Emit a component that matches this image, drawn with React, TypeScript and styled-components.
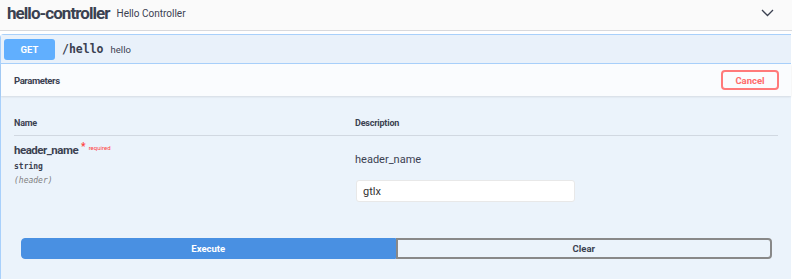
import React from "react";
import styled, { createGlobalStyle } from "styled-components";

const Global = createGlobalStyle`
  html, body { margin: 0; padding: 0; background: #ffffff; }
  body { font-family: Roboto, "Noto Sans", sans-serif; color: #3b4151; }
  * { box-sizing: border-box; }
`;

const Page = styled.div`
  width: 792px;
  height: 279px;
  overflow: hidden;
  background: #ffffff;
`;

const TagHeader = styled.div`
  height: 31px;
  display: flex;
  align-items: center;
  padding: 0 18px 5px 7px;
  background: #fafafa;
  border-bottom: 1px solid rgba(59, 65, 81, 0.18);
`;

const TagName = styled.span`
  font-size: 17px;
  font-weight: 700;
  letter-spacing: -0.95px;
  color: #3b4151;
`;

const TagDesc = styled.span`
  font-size: 10px;
  margin-left: 7px;
  margin-top: 2px;
  color: #3b4151;
  flex: 1;
`;

const Chevron = styled.svg`
  width: 13px;
  height: 8px;
`;

const OpBlock = styled.div`
  margin-top: 3px;
  width: 791px;
  border: 1px solid #a8d0fb;
  border-right: none;
  border-radius: 4px 0 0 4px;
  background: #ebf3fb;
`;

const Summary = styled.div`
  height: 29px;
  display: flex;
  align-items: center;
  padding: 0 3px;
  border-bottom: 1px solid #a8d0fb;
  background: #e9f1fa;
`;

const Method = styled.span`
  width: 51px;
  height: 21px;
  border-radius: 3px;
  background: #61affe;
  color: #ffffff;
  font-size: 9.5px;
  font-weight: 700;
  display: flex;
  align-items: center;
  justify-content: center;
`;

const Path = styled.span`
  font-family: "DejaVu Sans Mono", "Liberation Mono", monospace;
  font-weight: 700;
  font-size: 11.5px;
  color: #3b4151;
  margin-left: 7px;
`;

const OpSummary = styled.span`
  font-size: 9.5px;
  color: #3b4151;
  margin-left: 7px;
`;

const SectionHeader = styled.div`
  height: 32px;
  display: flex;
  align-items: center;
  justify-content: space-between;
  padding: 0 12px 0 13px;
  background: #fafcfe;
  box-shadow: 0 1px 2px rgba(0, 0, 0, 0.1);
`;

const SectionTitle = styled.span`
  font-size: 9.5px;
  font-weight: 700;
  letter-spacing: -0.4px;
  color: #3b4151;
`;

const CancelButton = styled.button`
  width: 58px;
  height: 20px;
  border: 2px solid #ff7a7a;
  border-radius: 4px;
  background: transparent;
  color: #ff6a6a;
  font-family: inherit;
  font-size: 9.5px;
  font-weight: 700;
  padding: 0;
`;

const Body = styled.div`
  padding: 19px 13px 30px 13px;
`;

const Table = styled.div`
  display: grid;
  grid-template-columns: 341px 1fr;
`;

const HeadCell = styled.div`
  font-size: 9px;
  font-weight: 700;
  letter-spacing: -0.2px;
  color: #3b4151;
  padding: 3px 0 7px 0;
  border-bottom: 1px solid rgba(59, 65, 81, 0.15);
`;

const Cell = styled.div`
  padding-top: 7px;
`;

const ParamName = styled.div`
  font-size: 11.5px;
  font-weight: 700;
  letter-spacing: -0.5px;
  color: #3b4151;
  display: flex;
  align-items: flex-start;
`;

const Required = styled.span`
  color: #ff4040;
  font-size: 6px;
  font-weight: 400;
  letter-spacing: 0;
  margin-left: 3px;
  margin-top: -1px;
  display: flex;
  align-items: center;
  gap: 3px;
`;

const Dot = styled.span`
  font-size: 10px;
  font-weight: 700;
  line-height: 10px;
`;

const ParamType = styled.div`
  font-family: "DejaVu Sans Mono", "Liberation Mono", monospace;
  font-size: 8px;
  font-weight: 600;
  color: #3b4151;
  margin-top: 5px;
`;

const ParamIn = styled.div`
  font-family: "DejaVu Sans Mono", "Liberation Mono", monospace;
  font-size: 8px;
  font-style: italic;
  color: #808080;
  margin-top: 5px;
`;

const DescText = styled.div`
  font-size: 11px;
  color: #3b4151;
  margin-top: 10px;
`;

const Input = styled.input`
  margin-top: 14px;
  margin-left: 1px;
  width: 219px;
  height: 22px;
  border: 1px solid #e8e8e8;
  border-radius: 3px;
  background: #ffffff;
  padding: 0 6px;
  font-family: inherit;
  font-size: 11px;
  color: #333;
  outline: none;
`;

const Actions = styled.div`
  display: flex;
  margin: 36px 6px 0 7px;
`;

const ActionButton = styled.button<{ $primary?: boolean }>`
  flex: 1;
  height: 21px;
  padding: 0;
  font-family: inherit;
  font-size: 9.5px;
  font-weight: 700;
  color: ${(p) => (p.$primary ? "#ffffff" : "#3b4151")};
  background: ${(p) => (p.$primary ? "#4990e2" : "transparent")};
  border: ${(p) => (p.$primary ? "1px solid #4990e2" : "2px solid #888888")};
  border-radius: ${(p) => (p.$primary ? "4px 0 0 4px" : "0 4px 4px 0")};
`;

export default function App() {
  return (
    <Page>
      <Global />
      <TagHeader>
        <TagName>hello-controller</TagName>
        <TagDesc>Hello Controller</TagDesc>
        <Chevron viewBox="0 0 13 8">
          <path d="M1 1 L6.5 6.5 L12 1" fill="none" stroke="#3b4151" strokeWidth="1.3" />
        </Chevron>
      </TagHeader>
      <OpBlock>
        <Summary>
          <Method>GET</Method>
          <Path>/hello</Path>
          <OpSummary>hello</OpSummary>
        </Summary>
        <SectionHeader>
          <SectionTitle>Parameters</SectionTitle>
          <CancelButton>Cancel</CancelButton>
        </SectionHeader>
        <Body>
          <Table>
            <HeadCell>Name</HeadCell>
            <HeadCell>Description</HeadCell>
            <Cell>
              <ParamName>
                header_name
                <Required>
                  <Dot>*</Dot>required
                </Required>
              </ParamName>
              <ParamType>string</ParamType>
              <ParamIn>(header)</ParamIn>
            </Cell>
            <Cell>
              <DescText>header_name</DescText>
              <Input defaultValue="gtlx" />
            </Cell>
          </Table>
          <Actions>
            <ActionButton $primary>Execute</ActionButton>
            <ActionButton>Clear</ActionButton>
          </Actions>
        </Body>
      </OpBlock>
    </Page>
  );
}
